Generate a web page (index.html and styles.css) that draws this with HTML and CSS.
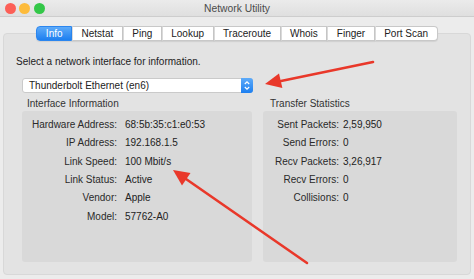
FILE: index.html
```html
<!DOCTYPE html>
<html>
<head>
    <title>Network Utility</title>
    <link rel="stylesheet" href="styles.css">
</head>
<body>
    <div class="window">
        <div class="titlebar">
            <div class="lights">
                <span class="light red"></span>
                <span class="light yellow"></span>
                <span class="light green"></span>
            </div>
            <div class="title">Network Utility</div>
            <div></div>
        </div>

        <div class="tabs">
            <span class="tab active">Info</span>
            <span class="tab">Netstat</span>
            <span class="tab">Ping</span>
            <span class="tab">Lookup</span>
            <span class="tab">Traceroute</span>
            <span class="tab">Whois</span>
            <span class="tab">Finger</span>
            <span class="tab">Port Scan</span>
        </div>

        <div class="panel">
            <p class="prompt">Select a network interface for information.</p>
            <div class="select">
                <span class="select-text">Thunderbolt Ethernet (en6)</span>
                <span class="stepper">
                    <svg width="12" height="15" viewBox="0 0 12 15">
                        <path d="M3.8 6 L6 3.8 L8.2 6" fill="none" stroke="#fff" stroke-width="1.2"/>
                        <path d="M3.8 9 L6 11.2 L8.2 9" fill="none" stroke="#fff" stroke-width="1.2"/>
                    </svg>
                </span>
            </div>

            <div class="groups">
                <section class="group group-info">
                    <h2>Interface Information</h2>
                    <div class="box">
                        <dl class="rows">
                            <dt>Hardware Address:</dt><dd>68:5b:35:c1:e0:53</dd>
                            <dt>IP Address:</dt><dd>192.168.1.5</dd>
                            <dt>Link Speed:</dt><dd>100 Mbit/s</dd>
                            <dt>Link Status:</dt><dd>Active</dd>
                            <dt>Vendor:</dt><dd>Apple</dd>
                            <dt>Model:</dt><dd>57762-A0</dd>
                        </dl>
                    </div>
                </section>
                <section class="group group-stats">
                    <h2>Transfer Statistics</h2>
                    <div class="box">
                        <dl class="rows">
                            <dt>Sent Packets:</dt><dd>2,59,950</dd>
                            <dt>Send Errors:</dt><dd>0</dd>
                            <dt>Recv Packets:</dt><dd>3,26,917</dd>
                            <dt>Recv Errors:</dt><dd>0</dd>
                            <dt>Collisions:</dt><dd>0</dd>
                        </dl>
                    </div>
                </section>
            </div>
        </div>

        <!-- annotation arrows drawn over the window -->
        <svg class="arrows" width="474" height="279" viewBox="0 0 474 279">
            <line x1="373" y1="62" x2="281" y2="81" stroke="#e9382a" stroke-width="2.6" stroke-linecap="round"/>
            <polygon points="265,84 282.4,88 279,73.6" fill="#e9382a"/>
            <line x1="307" y1="263" x2="186" y2="179" stroke="#e9382a" stroke-width="2.6" stroke-linecap="round"/>
            <polygon points="173,170 190.5,173 182,185.5" fill="#e9382a"/>
        </svg>
    </div>
</body>
</html>
```

FILE: styles.css
```css
body {
    margin: 0;
    font-family: "Liberation Sans", Arial, sans-serif;
    font-size: 10px;
    color: #222;
}
.window {
    position: relative;
    width: 474px;
    height: 279px;
    overflow: hidden;
    background: #ececec;
}
.titlebar {
    display: grid;
    grid-template-columns: 1fr auto 1fr;
    align-items: center;
    height: 16px;
    background: linear-gradient(#ebebeb, #dfdfdf);
    border-bottom: 1px solid #cdcdcd;
}
.lights {
    display: flex;
    gap: 3.5px;
    padding-left: 4.5px;
}
.light {
    width: 11px;
    height: 11px;
    border-radius: 50%;
}
.red { background: #fc5f57; }
.yellow { background: #fdbb3b; }
.green { background: #33c748; }
.title {
    font-size: 10.3px;
    color: #4b4b4b;
}
.tabs {
    position: relative;
    z-index: 1;
    display: flex;
    justify-content: center;
    margin-top: 9px;
}
.tab {
    height: 15px;
    line-height: 13px;
    padding: 0 8.5px;
    box-sizing: border-box;
    background: #fff;
    border: 1px solid #c8c8c8;
    border-left: 1px solid #dadada;
    color: #222;
    box-shadow: 0 1px 1px rgba(0, 0, 0, 0.08);
}
.tab:first-child {
    border-left: 1px solid #c8c8c8;
    border-radius: 4px 0 0 4px;
}
.tab:last-child {
    border-radius: 0 4px 4px 0;
}
.tab.active {
    background: linear-gradient(#5eabf9, #1d7ff0);
    border-color: #2b86ef;
    color: #fff;
}
.panel {
    height: 242px;
    margin: -8px 3px 0;
    padding: 22px 13px 0 12px;
    box-sizing: border-box;
    background: #e3e3e3;
    border: 1px solid #d8d8d8;
    border-radius: 4px;
}
.prompt {
    margin: 0;
    line-height: 12px;
}
.select {
    display: flex;
    align-items: center;
    width: 231px;
    height: 15px;
    margin: 10px 0 0 6px;
    box-sizing: border-box;
    background: #fff;
    border: 1px solid #cacaca;
    border-radius: 3px;
}
.select-text {
    padding-left: 6px;
}
.stepper {
    display: flex;
    align-self: stretch;
    width: 12px;
    margin: -1px -1px -1px auto;
    background: linear-gradient(#5eabf9, #1d7ff0);
    border-radius: 0 3px 3px 0;
}
.groups {
    display: flex;
    gap: 11px;
    margin: 5px 0 0 6px;
}
.group h2 {
    margin: 0 0 1px 5px;
    font-size: 10px;
    font-weight: normal;
    line-height: 12px;
    color: #333;
}
.group-info { width: 230px; }
.group-stats { width: 194px; }
.group-stats h2 { margin-left: 7px; }
.box {
    height: 151px;
    padding-top: 5px;
    box-sizing: border-box;
    background: #d9d9d9;
    border-radius: 3px;
}
.rows {
    display: grid;
    grid-template-columns: 95px 1fr;
    column-gap: 8px;
    margin: 0;
    line-height: 18.33px;
}
.group-stats .rows {
    grid-template-columns: 76px 1fr;
    column-gap: 4px;
}
.rows dt {
    text-align: right;
    color: #2a2a2a;
}
.rows dd {
    margin: 0;
}
.arrows {
    position: absolute;
    top: 0;
    left: 0;
    pointer-events: none;
}
```
